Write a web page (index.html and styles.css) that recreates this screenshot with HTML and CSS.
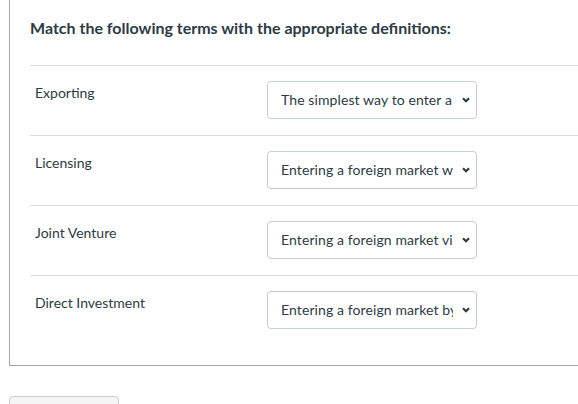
FILE: index.html
```html
<!DOCTYPE html>
<html lang="en">
<head>
<meta charset="utf-8">
<title>Matching question</title>
<link rel="stylesheet" href="styles.css">
</head>
<body>
<div class="page">
  <div class="question">
    <h2 class="question-text">Match the following terms with the appropriate definitions:</h2>
    <div class="rows">
      <div class="row">
        <div class="term">Exporting</div>
        <div class="select">
          <span class="select-text">The simplest way to enter a foreign market</span>
          <svg class="chev" width="8" height="6" viewBox="0 0 8 6"><path d="M1 1.2 L4 4.2 L7 1.2" fill="none" stroke="#2d3b45" stroke-width="2.2"/></svg>
        </div>
      </div>
      <div class="row">
        <div class="term">Licensing</div>
        <div class="select">
          <span class="select-text">Entering a foreign market with a licensing agreement</span>
          <svg class="chev" width="8" height="6" viewBox="0 0 8 6"><path d="M1 1.2 L4 4.2 L7 1.2" fill="none" stroke="#2d3b45" stroke-width="2.2"/></svg>
        </div>
      </div>
      <div class="row">
        <div class="term">Joint Venture</div>
        <div class="select">
          <span class="select-text">Entering a foreign market via a partnership</span>
          <svg class="chev" width="8" height="6" viewBox="0 0 8 6"><path d="M1 1.2 L4 4.2 L7 1.2" fill="none" stroke="#2d3b45" stroke-width="2.2"/></svg>
        </div>
      </div>
      <div class="row">
        <div class="term">Direct Investment</div>
        <div class="select">
          <span class="select-text">Entering a foreign market by developing facilities</span>
          <svg class="chev" width="8" height="6" viewBox="0 0 8 6"><path d="M1 1.2 L4 4.2 L7 1.2" fill="none" stroke="#2d3b45" stroke-width="2.2"/></svg>
        </div>
      </div>
    </div>
  </div>
  <div class="actions">
    <button class="btn" type="button"></button>
  </div>
</div>
</body>
</html>
```
FILE: styles.css
```css
html, body {
  margin: 0;
  padding: 0;
  background: #ffffff;
  overflow: hidden;
}
body {
  font-family: Lato, "Open Sans", "Liberation Sans", sans-serif;
  color: #2d3b45;
  width: 578px;
  height: 404px;
}
.page {
  padding-left: 9px;
}
.question {
  border-left: 1px solid #a5a5a5;
  border-bottom: 1px solid #a5a5a5;
  padding: 0 0 20px 20px;
  width: 548px;
}
.question-text {
  margin: 0;
  padding: 17px 0 26px 0;
  font-size: 16px;
  line-height: 22px;
  font-weight: 700;
  color: #2d3b45;
}
.row {
  display: flex;
  align-items: flex-start;
  border-top: 1px solid #dcdcdc;
  padding: 15px 0 16px 0;
}
.term {
  width: 232px;
  padding-left: 5px;
  margin-top: 2px;
  font-size: 14px;
  line-height: 20px;
}
.select {
  display: flex;
  align-items: center;
  height: 36px;
  border: 1px solid #c7cdd1;
  border-radius: 4px;
  background: #fff;
  padding: 0 6px 0 13px;
  box-sizing: content-box;
  width: 189px;
}
.select-text {
  width: 172px;
  overflow: hidden;
  white-space: nowrap;
  font-size: 14px;
  letter-spacing: 0.1px;
  line-height: 20px;
  flex: none;
}
.chev {
  margin-left: 9px;
  flex: none;
}
.actions {
  padding-top: 30px;
}
.btn {
  display: block;
  width: 110px;
  height: 30px;
  background: #f5f5f5;
  border: 1px solid #c7cdd1;
  border-radius: 4px;
  padding: 0;
}
```
